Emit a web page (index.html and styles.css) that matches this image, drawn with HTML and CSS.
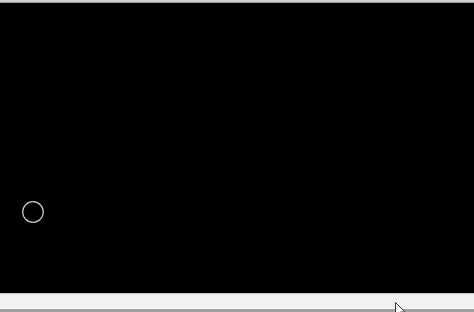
FILE: index.html
```html
<!DOCTYPE html>
<html>
<head>
<meta charset="utf-8">
<link rel="stylesheet" href="styles.css">
</head>
<body>
<div class="app">
  <div class="topbar"></div>
  <div class="canvas">
    <svg class="circle" width="24" height="24" viewBox="0 0 24 24"><circle cx="12" cy="12" r="10.3" fill="none" stroke="#c8c8c8" stroke-width="1.2"/></svg>
  </div>
  <div class="statusbar"></div>
  <div class="bottomedge"></div>
  <svg class="cursor" width="12" height="14" viewBox="0 0 12 14"><path d="M0.5 0.5 L0.5 14 L3.5 11 L6 14 L8 14 L5.5 10 L10 10 Z" fill="#fff" stroke="#333" stroke-width="1"/></svg>
</div>
</body>
</html>
```
FILE: styles.css
```css
html, body { margin: 0; padding: 0; background: #000; }
.app { position: relative; width: 474px; height: 312px; display: flex; flex-direction: column; overflow: hidden; }
.topbar { height: 2px; background: #cfcfcf; border-bottom: 1px solid #9a9a9a; flex: none; }
.canvas { flex: 1; background: #000; position: relative; }
.circle { position: absolute; left: 21px; top: 197px; }
.statusbar { height: 14px; background: #f0f0f0; border-top: 1px solid #c4c4c4; border-bottom: 1px solid #fafafa; flex: none; }
.bottomedge { height: 3px; background: #a0a0a0; flex: none; }
.cursor { position: absolute; left: 395px; top: 302px; }
```
